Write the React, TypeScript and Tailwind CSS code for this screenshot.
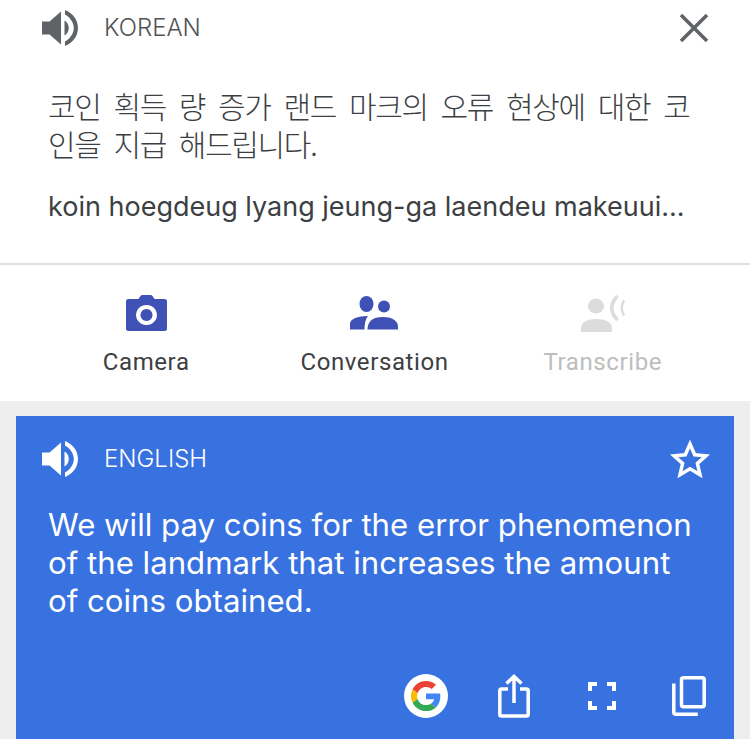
const SANS = "font-['Inter','Noto_Sans_CJK_KR',sans-serif]"

function Speaker({ color }: { color: string }) {
  return (
    <svg width="38" height="36" viewBox="0 0 38 36" fill="none">
      <path d="M1 11.500h7.500L20 1.500v33L8.500 24.500H1z" fill={color} />
      <path d="M24 0c7.500 3 13 9.500 13 18s-5.500 15-13 18v-4.500c4.500-2.500 8.800-7.500 8.800-13.500S28.500 7 24 4.500z" fill={color} />
      <path d="M23.500 10.500c2.500 1.500 4.300 4.300 4.300 7.500s-1.800 6-4.300 7.500z" fill={color} />
    </svg>
  )
}

function CameraIcon() {
  return (
    <svg width="41" height="36" viewBox="0 0 41 36">
      <path
        fillRule="evenodd"
        d="M12.500 4l2-3q.500-1 2-1h8q1.500 0 2 1l2 3h10Q41 4 41 6.500v27q0 2.500-2.500 2.500h-36Q0 36 0 33.500v-27Q0 4 2.500 4zM20.500 10a10.500 10 0 1 0 .01 0zM20.500 14a6 6 0 1 1-.01 0z"
        fill="#3f51b5"
      />
    </svg>
  )
}

function PeopleIcon() {
  return (
    <svg width="48" height="34" viewBox="0 0 48 34" fill="#3f51b5">
      <ellipse cx="16.500" cy="8" rx="7" ry="8" />
      <circle cx="34" cy="10.500" r="6" />
      <path d="M0 33.500v-6C0 23 8 20 18 20c-2.500 3-3.500 8-3.500 13.500z" />
      <path d="M17.500 33.500c0-8 5-12.500 15.500-12.500s15 4.500 15 10v2.500z" />
    </svg>
  )
}

function TranscribeIcon() {
  return (
    <svg width="44" height="37" viewBox="0 0 44 37" fill="#dcdcdc">
      <ellipse cx="15" cy="11" rx="8" ry="7.500" />
      <path d="M0 37v-4c0-6 7-9 15.500-9S31 27 31 33v4z" />
      <path d="M36.500 1Q25 13 36.500 25" fill="none" stroke="#dcdcdc" strokeWidth="3.500" />
      <path d="M43 5.500Q38.500 13 43 20.500" fill="none" stroke="#dcdcdc" strokeWidth="2.500" />
    </svg>
  )
}

function GoogleIcon() {
  return (
    <div className="flex h-[44px] w-[44px] items-center justify-center rounded-full bg-white">
      <svg width="30" height="30" viewBox="0 0 48 48">
        <path fill="#ea4335" d="M24 9.500c3.500 0 6.700 1.300 9.200 3.400l6.800-6.800C35.900 2.400 30.300 0 24 0 14.600 0 6.500 5.400 2.600 13.300l7.900 6.100C12.400 13.700 17.700 9.500 24 9.500z" />
        <path fill="#4285f4" d="M46.900 24.500c0-1.600-.2-3.300-.5-4.500H24v9.300h12.900c-.6 3-2.300 5.500-4.900 7.200l7.700 6c4.500-4.100 7.200-10.300 7.200-18z" />
        <path fill="#fbbc05" d="M10.500 28.600C10 27.200 9.700 25.600 9.700 24s.3-3.200.8-4.600l-7.900-6.100C.9 16.600 0 20.200 0 24s.9 7.400 2.600 10.700z" />
        <path fill="#34a853" d="M24 48c6.500 0 11.900-2.100 15.700-5.800l-7.700-6c-2.100 1.400-4.800 2.300-8 2.300-6.300 0-11.600-4.200-13.500-9.900l-7.900 6.100C6.500 42.600 14.600 48 24 48z" />
      </svg>
    </div>
  )
}

function ShareIcon() {
  return (
    <svg width="32" height="44" viewBox="0 0 32 44" fill="none" stroke="#fff" strokeWidth="3.500">
      <path d="M10 15H3.500Q1.800 15 1.800 16.800v23.400Q1.800 42 3.500 42h25q1.700 0 1.700-1.800V16.800Q30.200 15 28.500 15H22" />
      <path d="M16 29V2.500M8.500 9.500L16 2.500l7.500 7" />
    </svg>
  )
}

function ExpandIcon() {
  return (
    <svg width="28" height="28" viewBox="0 0 28 28" fill="none" stroke="#fff" strokeWidth="4">
      <path d="M2 9V2h7M19 2h7v7M26 19v7h-7M9 26H2v-7" />
    </svg>
  )
}

function CopyIcon() {
  return (
    <svg width="34" height="40" viewBox="0 0 34 40" fill="none" stroke="#fff" strokeWidth="3.500">
      <rect x="9.500" y="1.800" width="22.700" height="29" rx="2" />
      <path d="M1.800 7.500v28.700q0 2 2 2h22" />
    </svg>
  )
}

export default function App() {
  return (
    <div className={`h-[739px] w-[750px] overflow-hidden bg-[#eeeeee] ${SANS}`}>
      {/* source language */}
      <div className="h-[265px] border-b-2 border-[#e0e0e0] bg-white">
        <div className="flex h-[56px] items-center pl-[41px] pr-[41px]">
          <Speaker color="#5f6368" />
          <span className="ml-[25px] text-[24px] font-light text-[#4f5357]">KOREAN</span>
          <svg className="ml-auto" width="30" height="30" viewBox="0 0 30 30" stroke="#5f6368" strokeWidth="3.500">
            <path d="M2 2l26 26M28 2L2 28" />
          </svg>
        </div>
        <p className="mt-[32px] whitespace-nowrap pl-[48px] text-[30px] font-light leading-[38px] tracking-[-1.400px] text-[#3c4043] [word-spacing:6px]">
          코인 획득 량 증가 랜드 마크의 오류 현상에 대한 코<br />인을 지급 해드립니다.
        </p>
        <p className="mt-[24px] pl-[48px] text-[27px] leading-[38px] text-[#3c4043]">
          koin hoegdeug lyang jeung-ga laendeu makeuui...
        </p>
      </div>

      {/* tools */}
      <div className="grid h-[136px] grid-cols-3 bg-white pl-[32px] pr-[33px] pt-[29px] font-['Roboto',sans-serif] text-[24px] tracking-[0.6px]">
        <div className="flex flex-col items-center">
          <div className="flex h-[38px] items-center"><CameraIcon /></div>
          <span className="mt-[12px] text-[#3c4043]">Camera</span>
        </div>
        <div className="flex flex-col items-center">
          <div className="flex h-[38px] items-center"><PeopleIcon /></div>
          <span className="mt-[12px] text-[#3c4043]">Conversation</span>
        </div>
        <div className="flex flex-col items-center">
          <div className="flex h-[38px] items-center"><TranscribeIcon /></div>
          <span className="mt-[12px] text-[#bdbdbd]">Transcribe</span>
        </div>
      </div>

      {/* translation card */}
      <div className="mx-[16px] mt-[15px] h-[323px] bg-[#3871e0] text-white">
        <div className="flex h-[86px] items-center pl-[25px] pr-[24px]">
          <Speaker color="#ffffff" />
          <span className="ml-[25px] text-[24px] font-light">ENGLISH</span>
          <svg className="ml-auto" width="40" height="38" viewBox="0 0 40 38" fill="none" stroke="#fff" strokeWidth="3.500">
            <path d="M20 4l4.700 10.800 11.300 1-8.600 7.600 2.600 11.300L20 28.700 10 34.700l2.600-11.300L4 15.800l11.300-1z" />
          </svg>
        </div>
        <p className="mt-[4px] pl-[32px] text-[31.200px] leading-[38px]">
          We will pay coins for the error phenomenon
          <br />
          of the landmark that increases the amount
          <br />
          of coins obtained.
        </p>
        <div className="mt-[54px] flex items-center pl-[388px]">
          <GoogleIcon />
          <div className="ml-[50px]"><ShareIcon /></div>
          <div className="ml-[58px]"><ExpandIcon /></div>
          <div className="ml-[56px]"><CopyIcon /></div>
        </div>
      </div>
    </div>
  )
}
